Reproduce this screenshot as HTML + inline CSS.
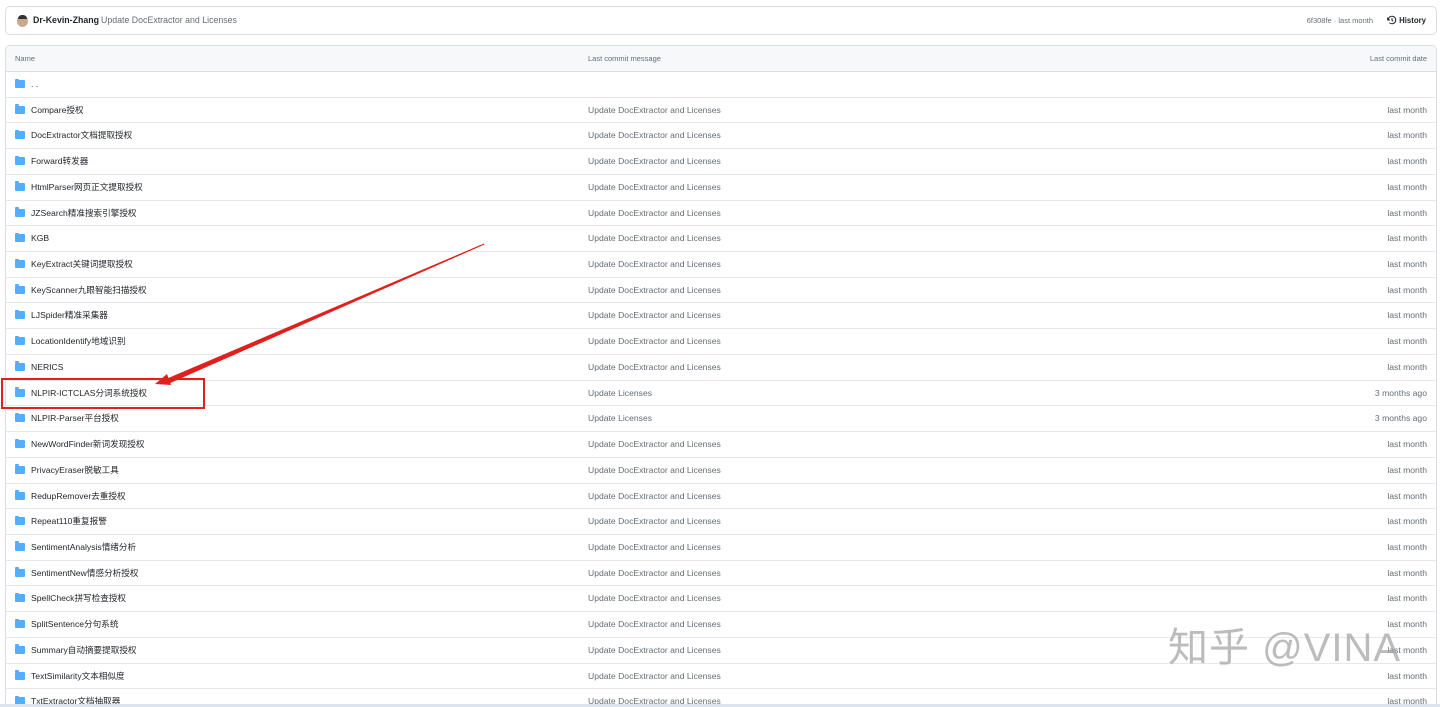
<!DOCTYPE html>
<html><head><meta charset="utf-8"><style>
*{box-sizing:border-box;margin:0;padding:0}
html,body{width:1440px;height:707px;overflow:hidden}
body{background:#fff;font-family:"Liberation Sans","Noto Sans CJK SC",sans-serif;font-size:8.6px;line-height:10px;color:#1f2328;position:relative}
.top{position:absolute;left:5px;top:6px;width:1432px;height:29px;border:1px solid #d8dee4;border-radius:5px;background:#fff}
.av{position:absolute;left:11px;top:8px;width:11px;height:12px;border-radius:50%;background:#c9a88c}
.av:before{content:"";position:absolute;left:1px;top:0;width:9px;height:4px;background:#333;border-radius:4px 4px 0 0}
.author{position:absolute;left:27px;top:8px;font-weight:bold;font-size:8.8px}
.msg{position:absolute;left:95px;top:8px;color:#656d76;font-size:8.8px}
.sha{position:absolute;right:63px;top:9px;color:#656d76;font-size:7.5px}
.hist{position:absolute;right:10px;top:8px;font-weight:bold;font-size:7.8px}
.tbl{position:absolute;left:5px;top:45px;width:1432px;height:680px;border:1px solid #d8dee4;border-radius:5px;overflow:hidden}
.hd{height:26px;background:#f6f8fa;border-bottom:1px solid #d8dee4;position:relative;color:#656d76;font-size:7.5px}
.row{height:25.72px;border-bottom:1px solid #e6e9ec;position:relative}
.c1{position:absolute;left:25px;top:7px;line-height:10px}
.c2{position:absolute;left:582px;top:7px;color:#656d76;line-height:10px}
.c3{position:absolute;right:9px;top:7px;color:#656d76;line-height:10px}
.hd .c1{left:9px;top:8px}.hd .c2{top:8px}.hd .c3{top:8px}
.f{position:absolute;left:9px;top:8px;width:10px;height:8px;background:#54aeff;border-radius:1px}
.f:before{content:"";position:absolute;left:0;top:-1.5px;width:4px;height:2px;background:#54aeff;border-radius:1px 1px 0 0}
.bar{position:absolute;left:0;top:704px;width:1440px;height:3px;background:#dde4ee}
.wm{position:absolute;left:1168px;top:624px;font-size:40px;line-height:48px;color:rgba(160,160,160,.7);letter-spacing:1px}
.box{position:absolute;left:1px;top:378px;width:204px;height:31px;border:2px solid #e0201c}
</style></head><body>
<div class="top"><div class="av"></div><div class="author">Dr-Kevin-Zhang</div><div class="msg">Update DocExtractor and Licenses</div><div class="sha">6f308fe · last month</div>
<div class="hist"><svg width="10" height="10" viewBox="0 0 16 16" style="vertical-align:-2px;margin-right:2px"><path d="M2 8a6 6 0 1 1 1.8 4.3" fill="none" stroke="#1f2328" stroke-width="1.6"/><path d="M1 4v4h4" fill="none" stroke="#1f2328" stroke-width="1.6"/><path d="M8 5v3.5l2 1.5" fill="none" stroke="#1f2328" stroke-width="1.6"/></svg>History</div></div>
<div class="tbl">
<div class="hd"><span class="c1">Name</span><span class="c2">Last commit message</span><span class="c3">Last commit date</span></div>
<div class="row"><i class="f"></i><span class="c1">. .</span></div>
<div class="row"><i class="f"></i><span class="c1">Compare授权</span><span class="c2">Update DocExtractor and Licenses</span><span class="c3">last month</span></div>
<div class="row"><i class="f"></i><span class="c1">DocExtractor文档提取授权</span><span class="c2">Update DocExtractor and Licenses</span><span class="c3">last month</span></div>
<div class="row"><i class="f"></i><span class="c1">Forward转发器</span><span class="c2">Update DocExtractor and Licenses</span><span class="c3">last month</span></div>
<div class="row"><i class="f"></i><span class="c1">HtmlParser网页正文提取授权</span><span class="c2">Update DocExtractor and Licenses</span><span class="c3">last month</span></div>
<div class="row"><i class="f"></i><span class="c1">JZSearch精准搜索引擎授权</span><span class="c2">Update DocExtractor and Licenses</span><span class="c3">last month</span></div>
<div class="row"><i class="f"></i><span class="c1">KGB</span><span class="c2">Update DocExtractor and Licenses</span><span class="c3">last month</span></div>
<div class="row"><i class="f"></i><span class="c1">KeyExtract关键词提取授权</span><span class="c2">Update DocExtractor and Licenses</span><span class="c3">last month</span></div>
<div class="row"><i class="f"></i><span class="c1">KeyScanner九眼智能扫描授权</span><span class="c2">Update DocExtractor and Licenses</span><span class="c3">last month</span></div>
<div class="row"><i class="f"></i><span class="c1">LJSpider精准采集器</span><span class="c2">Update DocExtractor and Licenses</span><span class="c3">last month</span></div>
<div class="row"><i class="f"></i><span class="c1">LocationIdentify地域识别</span><span class="c2">Update DocExtractor and Licenses</span><span class="c3">last month</span></div>
<div class="row"><i class="f"></i><span class="c1">NERICS</span><span class="c2">Update DocExtractor and Licenses</span><span class="c3">last month</span></div>
<div class="row"><i class="f"></i><span class="c1">NLPIR-ICTCLAS分词系统授权</span><span class="c2">Update Licenses</span><span class="c3">3 months ago</span></div>
<div class="row"><i class="f"></i><span class="c1">NLPIR-Parser平台授权</span><span class="c2">Update Licenses</span><span class="c3">3 months ago</span></div>
<div class="row"><i class="f"></i><span class="c1">NewWordFinder新词发现授权</span><span class="c2">Update DocExtractor and Licenses</span><span class="c3">last month</span></div>
<div class="row"><i class="f"></i><span class="c1">PrivacyEraser脱敏工具</span><span class="c2">Update DocExtractor and Licenses</span><span class="c3">last month</span></div>
<div class="row"><i class="f"></i><span class="c1">RedupRemover去重授权</span><span class="c2">Update DocExtractor and Licenses</span><span class="c3">last month</span></div>
<div class="row"><i class="f"></i><span class="c1">Repeat110重复报警</span><span class="c2">Update DocExtractor and Licenses</span><span class="c3">last month</span></div>
<div class="row"><i class="f"></i><span class="c1">SentimentAnalysis情绪分析</span><span class="c2">Update DocExtractor and Licenses</span><span class="c3">last month</span></div>
<div class="row"><i class="f"></i><span class="c1">SentimentNew情感分析授权</span><span class="c2">Update DocExtractor and Licenses</span><span class="c3">last month</span></div>
<div class="row"><i class="f"></i><span class="c1">SpellCheck拼写检查授权</span><span class="c2">Update DocExtractor and Licenses</span><span class="c3">last month</span></div>
<div class="row"><i class="f"></i><span class="c1">SplitSentence分句系统</span><span class="c2">Update DocExtractor and Licenses</span><span class="c3">last month</span></div>
<div class="row"><i class="f"></i><span class="c1">Summary自动摘要提取授权</span><span class="c2">Update DocExtractor and Licenses</span><span class="c3">last month</span></div>
<div class="row"><i class="f"></i><span class="c1">TextSimilarity文本相似度</span><span class="c2">Update DocExtractor and Licenses</span><span class="c3">last month</span></div>
<div class="row"><i class="f"></i><span class="c1">TxtExtractor文档抽取器</span><span class="c2">Update DocExtractor and Licenses</span><span class="c3">last month</span></div>
</div>
<div class="box"></div>
<svg style="position:absolute;left:0;top:0" width="1440" height="707"><polygon points="484,243.5 484.5,244.5 168,384 166,379" fill="#e0201c"/><polygon points="155,384 167,374 171,385" fill="#e0201c"/></svg>
<div class="wm">知乎 @VINA</div>
<div class="bar"></div>
</body></html>
